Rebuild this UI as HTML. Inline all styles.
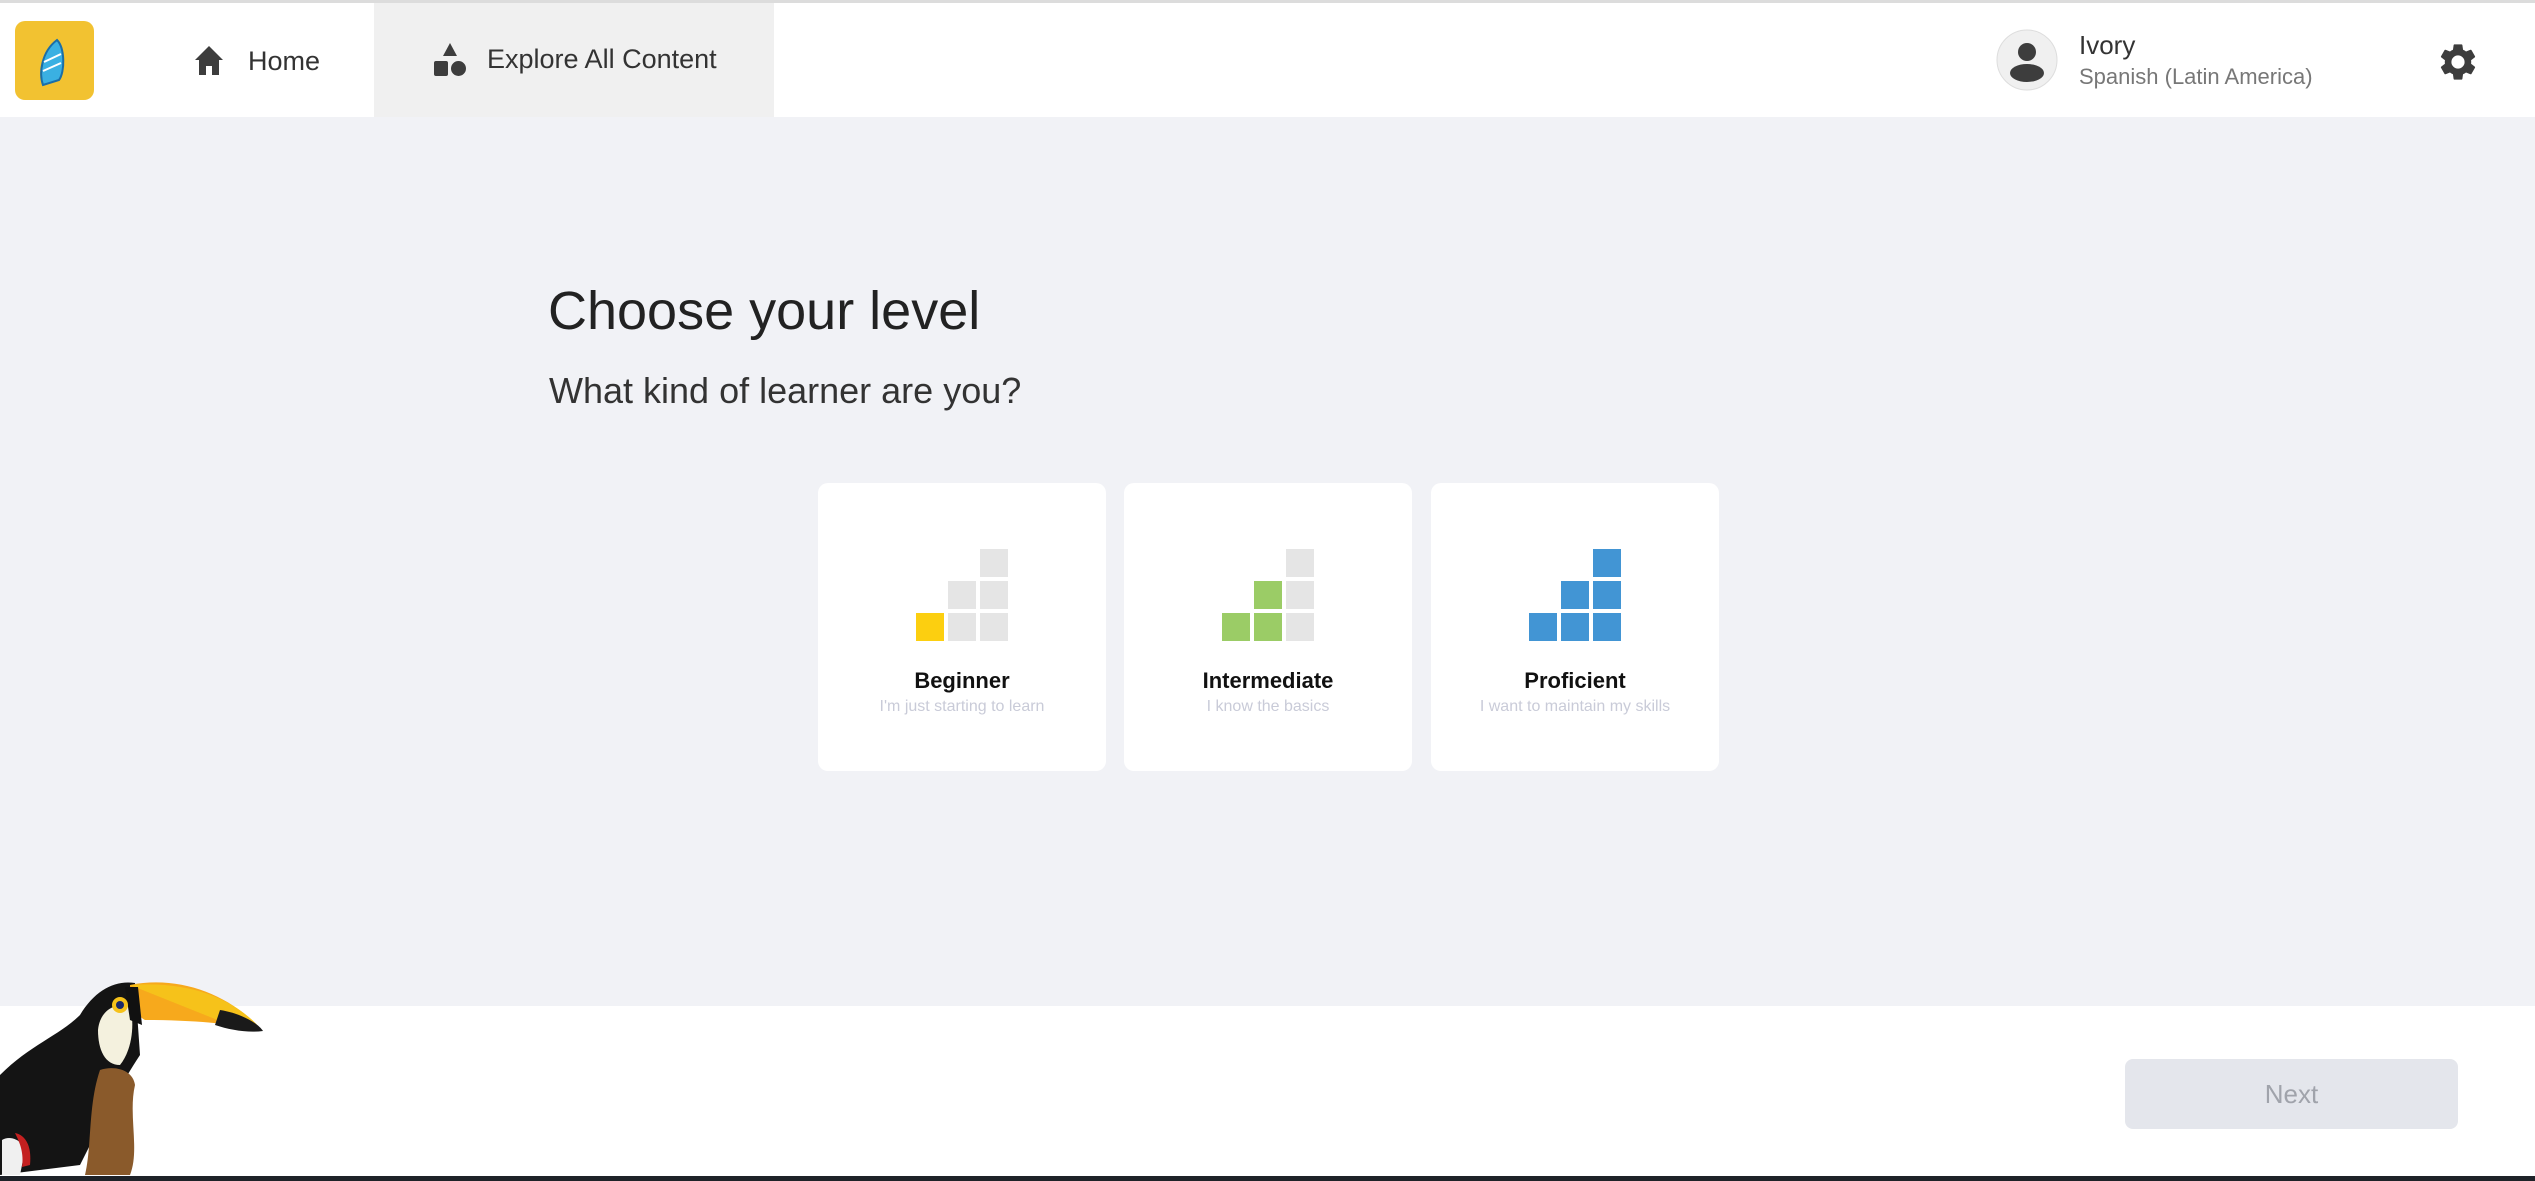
<!DOCTYPE html>
<html><head><meta charset="utf-8"><style>
*{margin:0;padding:0;box-sizing:border-box}
body{width:2535px;height:1181px;overflow:hidden;background:#f1f2f6;font-family:"Liberation Sans",sans-serif;position:relative}
.hdr{position:absolute;left:0;top:0;width:2535px;height:117px;background:#fff;border-top:3px solid #dcdcdc}
.abs{position:absolute}
.card{position:absolute;top:483px;width:288px;height:288px;background:#fff;border-radius:10px}
.sq{position:absolute;width:28px;height:28px}
.t{position:absolute;left:0;width:100%;text-align:center}
.t1{top:668px;font-size:22px;font-weight:bold;color:#111}
.t2{top:698px;font-size:16px;color:#c9cbd8}
</style></head><body>
<div class="hdr">
  <div class="abs" style="left:15px;top:18px;width:79px;height:79px;background:#f2c231;border-radius:10px"></div>
  <svg class="abs" style="left:35px;top:35px" width="40" height="50" viewBox="0 0 40 50"><path d="M22 2 C30 10 30 34 24 42 L8 47 C4 36 6 14 22 2Z" fill="#3ab0e2" stroke="#1a6ea8" stroke-width="2"/><path d="M9 24 L26 16 M8 33 L26 25" stroke="#fff" stroke-width="2"/></svg>
  <svg class="abs" style="left:195px;top:43px" width="28" height="29" viewBox="0 0 28 29"><path d="M14 0 L28 14 L24 14 L24 29 L17 29 L17 20 L11 20 L11 29 L4 29 L4 14 L0 14Z" fill="#3d3d3d"/></svg>
  <div class="abs" style="left:248px;top:43px;font-size:27px;color:#333">Home</div>
  <div class="abs" style="left:374px;top:0;width:400px;height:114px;background:#f0f0f0"></div>
  <svg class="abs" style="left:434px;top:40px" width="32" height="33" viewBox="0 0 32 33"><path d="M16 0 L23 13 L9 13Z" fill="#3d3d3d"/><rect x="0" y="18" width="14" height="15" rx="2" fill="#3d3d3d"/><circle cx="24.5" cy="25.5" r="7.5" fill="#3d3d3d"/></svg>
  <div class="abs" style="left:487px;top:41px;font-size:27px;color:#333">Explore All Content</div>
  <svg class="abs" style="left:1996px;top:26px" width="62" height="62" viewBox="0 0 62 62"><circle cx="31" cy="31" r="30" fill="#f0f0f0" stroke="#ddd"/><circle cx="31" cy="23" r="9" fill="#3d3d3d"/><ellipse cx="31" cy="44" rx="17" ry="9" fill="#3d3d3d"/></svg>
  <div class="abs" style="left:2079px;top:27px;font-size:26px;color:#333">Ivory</div>
  <div class="abs" style="left:2079px;top:61px;font-size:22px;color:#777">Spanish (Latin America)</div>
  <svg class="abs" style="left:2436px;top:37px" width="44" height="44" viewBox="0 0 24 24"><path fill="#3d3d3d" d="M19.14 12.94c.04-.3.06-.61.06-.94s-.02-.64-.07-.94l2.03-1.58a.49.49 0 00.12-.61l-1.92-3.32a.49.49 0 00-.59-.22l-2.39.96c-.5-.38-1.03-.7-1.62-.94l-.36-2.54a.48.48 0 00-.48-.41h-3.84c-.24 0-.43.17-.47.41l-.36 2.54c-.59.24-1.13.57-1.62.94l-2.39-.96a.49.49 0 00-.59.22L2.74 8.87a.47.47 0 00.12.61l2.03 1.58c-.05.3-.09.63-.09.94s.02.64.07.94l-2.03 1.58a.49.49 0 00-.12.61l1.92 3.32c.12.22.37.29.59.22l2.39-.96c.5.38 1.03.7 1.62.94l.36 2.54c.05.24.24.41.48.41h3.84c.24 0 .44-.17.47-.41l.36-2.54c.59-.24 1.13-.56 1.62-.94l2.39.96c.22.08.47 0 .59-.22l1.92-3.32a.47.47 0 00-.12-.61l-2.01-1.58zM12 15.6A3.6 3.6 0 1112 8.4a3.6 3.6 0 010 7.2z"/></svg>
</div>

<div class="abs" style="left:548px;top:280px;font-size:54px;color:#222">Choose your level</div>
<div class="abs" style="left:549px;top:370px;font-size:36px;color:#333">What kind of learner are you?</div>

<div class="card" style="left:818px">
  <div class="sq" style="left:98px;top:130px;background:#fccf10"></div>
  <div class="sq" style="left:130px;top:130px;background:#e5e5e5"></div>
  <div class="sq" style="left:162px;top:130px;background:#e5e5e5"></div>
  <div class="sq" style="left:130px;top:98px;background:#e5e5e5"></div>
  <div class="sq" style="left:162px;top:98px;background:#e5e5e5"></div>
  <div class="sq" style="left:162px;top:66px;background:#e5e5e5"></div>
  <div class="t t1" style="top:185px">Beginner</div>
  <div class="t t2" style="top:215px">I'm just starting to learn</div>
</div>
<div class="card" style="left:1124px">
  <div class="sq" style="left:98px;top:130px;background:#9bcc66"></div>
  <div class="sq" style="left:130px;top:130px;background:#9bcc66"></div>
  <div class="sq" style="left:162px;top:130px;background:#e5e5e5"></div>
  <div class="sq" style="left:130px;top:98px;background:#9bcc66"></div>
  <div class="sq" style="left:162px;top:98px;background:#e5e5e5"></div>
  <div class="sq" style="left:162px;top:66px;background:#e5e5e5"></div>
  <div class="t t1" style="top:185px">Intermediate</div>
  <div class="t t2" style="top:215px">I know the basics</div>
</div>
<div class="card" style="left:1431px">
  <div class="sq" style="left:98px;top:130px;background:#4295d4"></div>
  <div class="sq" style="left:130px;top:130px;background:#4295d4"></div>
  <div class="sq" style="left:162px;top:130px;background:#4295d4"></div>
  <div class="sq" style="left:130px;top:98px;background:#4295d4"></div>
  <div class="sq" style="left:162px;top:98px;background:#4295d4"></div>
  <div class="sq" style="left:162px;top:66px;background:#4295d4"></div>
  <div class="t t1" style="top:185px">Proficient</div>
  <div class="t t2" style="top:215px">I want to maintain my skills</div>
</div>

<div class="abs" style="left:0;top:1006px;width:2535px;height:170px;background:#fff"></div>
<div class="abs" style="left:0;top:1176px;width:2535px;height:5px;background:#1e2228"></div>
<div class="abs" style="left:2125px;top:1059px;width:333px;height:70px;background:#e4e6ec;border-radius:8px;text-align:center;line-height:70px;font-size:26px;color:#a0a3ab">Next</div>

<svg class="abs" style="left:0;top:975px" width="270" height="202" viewBox="0 0 270 202">
  <path d="M0 100 C30 70 60 60 80 40 C95 15 115 5 135 8 L140 80 C120 110 100 150 80 190 L0 200Z" fill="#141414"/>
  <path d="M98 55 C100 35 115 28 130 30 C135 50 132 75 120 90 C105 90 98 75 98 55Z" fill="#f4f1de"/>
  <path d="M130 10 C180 0 230 20 262 55 C240 50 200 45 145 45 C135 40 130 25 130 10Z" fill="#f7a91c"/>
  <path d="M130 10 C200 5 240 30 262 55 L230 50 Z" fill="#f6c21a"/>
  <path d="M220 35 C240 38 258 48 263 56 C248 58 230 55 215 50Z" fill="#1a1a1a"/>
  <path d="M125 12 L138 12 L142 50 L130 45Z" fill="#111"/>
  <circle cx="120" cy="30" r="8" fill="#f6c21a"/><circle cx="120" cy="30" r="4" fill="#1a2a6a"/>
  <path d="M100 95 C115 90 133 95 135 110 C128 140 140 175 130 200 L85 200 C92 170 88 130 100 95Z" fill="#8a5a2b"/>
  <path d="M2 165 C10 160 22 165 25 175 L20 200 L2 200Z" fill="#f0f0f0"/>
  <path d="M15 158 C25 160 32 170 30 190 L22 192 C24 178 20 168 15 158Z" fill="#c42020"/>
</svg>
</body></html>
